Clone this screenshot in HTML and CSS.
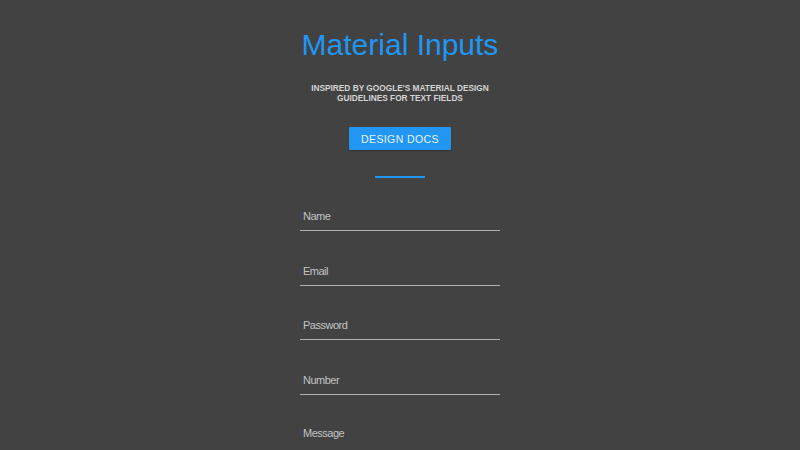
FILE: index.html
```html
<!DOCTYPE html>
<html lang="en">
<head>
<meta charset="utf-8">
<title>Material Inputs</title>
<link rel="stylesheet" href="styles.css">
</head>
<body>
<main class="page">
  <header class="intro">
    <h1 class="title">Material Inputs</h1>
    <p class="subtitle">Inspired by Google's Material Design<br>guidelines for text fields</p>
    <a class="docs-btn" href="#">Design Docs</a>
    <span class="divider"></span>
  </header>
  <form class="form">
    <label class="field"><input class="field-input" type="text" placeholder="Name"></label>
    <label class="field"><input class="field-input" type="email" placeholder="Email"></label>
    <label class="field"><input class="field-input" type="password" placeholder="Password"></label>
    <label class="field"><input class="field-input" type="number" placeholder="Number"></label>
    <label class="field"><textarea class="field-input field-area" placeholder="Message"></textarea></label>
  </form>
</main>
</body>
</html>
```
FILE: styles.css
```css
* { box-sizing: border-box; }

html, body {
  margin: 0;
  padding: 0;
  background: #424242;
  font-family: "Liberation Sans", Arial, sans-serif;
  overflow: hidden;
}

.page {
  display: flex;
  flex-direction: column;
  align-items: center;
}

.intro {
  display: flex;
  flex-direction: column;
  align-items: center;
}

.title {
  margin: 28px 0 0;
  font-size: 30px;
  font-weight: 400;
  line-height: 34px;
  color: #2196f3;
}

.subtitle {
  margin: 21px 0 0;
  font-size: 8.3px;
  font-weight: 700;
  line-height: 10px;
  text-transform: uppercase;
  text-align: center;
  color: #d4d4d4;
}

.docs-btn {
  margin-top: 24px;
  width: 102px;
  height: 23px;
  display: flex;
  align-items: center;
  justify-content: center;
  background: #2196f3;
  color: #e8f3fd;
  font-size: 10.5px;
  letter-spacing: 0.4px;
  text-transform: uppercase;
  text-decoration: none;
  border-radius: 1px;
  box-shadow: 0 1px 2px rgba(0, 0, 0, 0.25);
}

.divider {
  margin-top: 26px;
  width: 50px;
  height: 2px;
  background: #2196f3;
}

.form {
  margin-top: 21px;
  width: 200px;
  display: flex;
  flex-direction: column;
  gap: 22.6px;
}

.field {
  display: block;
  border-bottom: 1px solid #b4b4b4;
}

.field-input {
  display: block;
  width: 100%;
  height: 31px;
  padding: 3px 3px 0;
  margin: 0;
  border: 0;
  background: transparent;
  outline: none;
  font-family: "Liberation Sans", Arial, sans-serif;
  font-size: 11px;
  letter-spacing: -0.5px;
  color: #e0e0e0;
}

/* message box is taller and grows downward */
.field-area {
  height: 80px;
  padding: 10px 3px 0;
  line-height: 13px;
  resize: none;
  overflow: hidden;
}

.field-input::placeholder {
  color: #c2c2c2;
}
```
